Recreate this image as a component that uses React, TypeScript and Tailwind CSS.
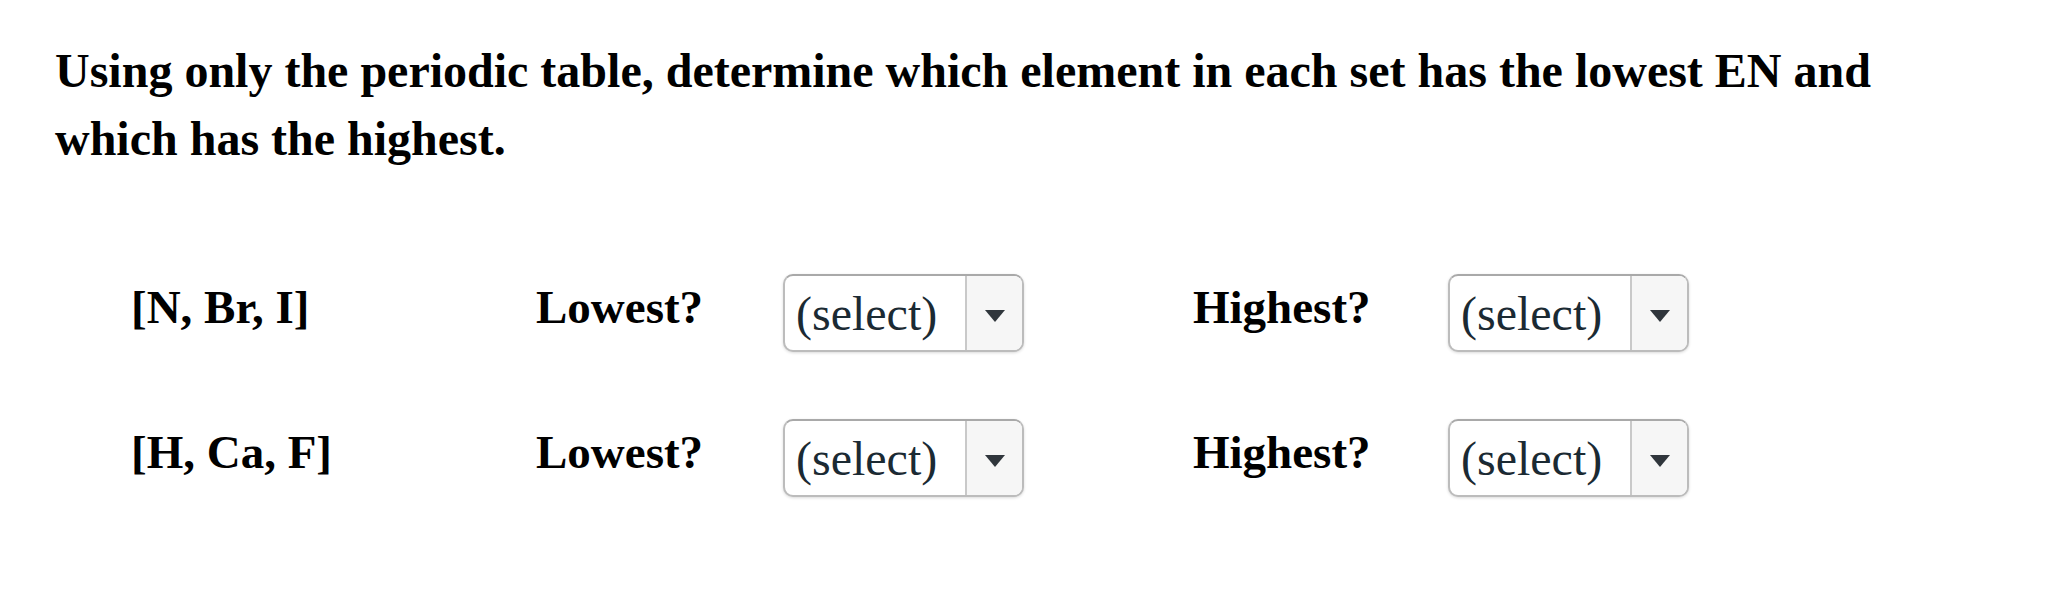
import React from 'react'

type Row = { set: string }

const rows: Row[] = [{ set: '[N, Br, I]' }, { set: '[H, Ca, F]' }]

const serif = "font-['Liberation_Serif','Times_New_Roman',serif]"

function FakeSelect() {
  return (
    <div className="flex w-[241px] h-[78px] rounded-[10px] border-2 border-[#bcbcbc] border-t-[#a9a9a9] bg-white shadow-[0_1px_3px_rgba(0,0,0,0.15)] overflow-hidden">
      <div className="flex-1 pl-[11px] pt-[14px] text-[48px] leading-none text-[#1b2a33]">
        (select)
      </div>
      <div className="w-[57px] border-l-2 border-[#c9c9c9] bg-[#f6f6f6] flex items-center justify-center pt-[6px]">
        <svg width="20" height="12" viewBox="0 0 20 12">
          <path d="M0 0 H20 L10 12 Z" fill="#30363c" />
        </svg>
      </div>
    </div>
  )
}

export default function App() {
  return (
    <div className={`min-h-[591px] bg-white text-black ${serif} pl-[55px] pt-[37px]`}>
      <p className="font-bold text-[48px] leading-[68px] max-w-[1950px]">
        Using only the periodic table, determine which element in each set has the lowest EN and
        <br />
        which has the highest.
      </p>

      <div className="mt-[101px] pl-[76px] flex flex-col gap-[67px]">
        {rows.map(r => (
          <div key={r.set} className="flex items-start h-[78px]">
            <div className="w-[405px] pt-[10px] font-bold text-[47px] leading-[47px]">{r.set}</div>
            <div className="w-[247px] pt-[10px] font-bold text-[47px] leading-[47px]">Lowest?</div>
            <div className="w-[410px]">
              <FakeSelect />
            </div>
            <div className="w-[255px] pt-[10px] font-bold text-[47px] leading-[47px]">Highest?</div>
            <FakeSelect />
          </div>
        ))}
      </div>
    </div>
  )
}
